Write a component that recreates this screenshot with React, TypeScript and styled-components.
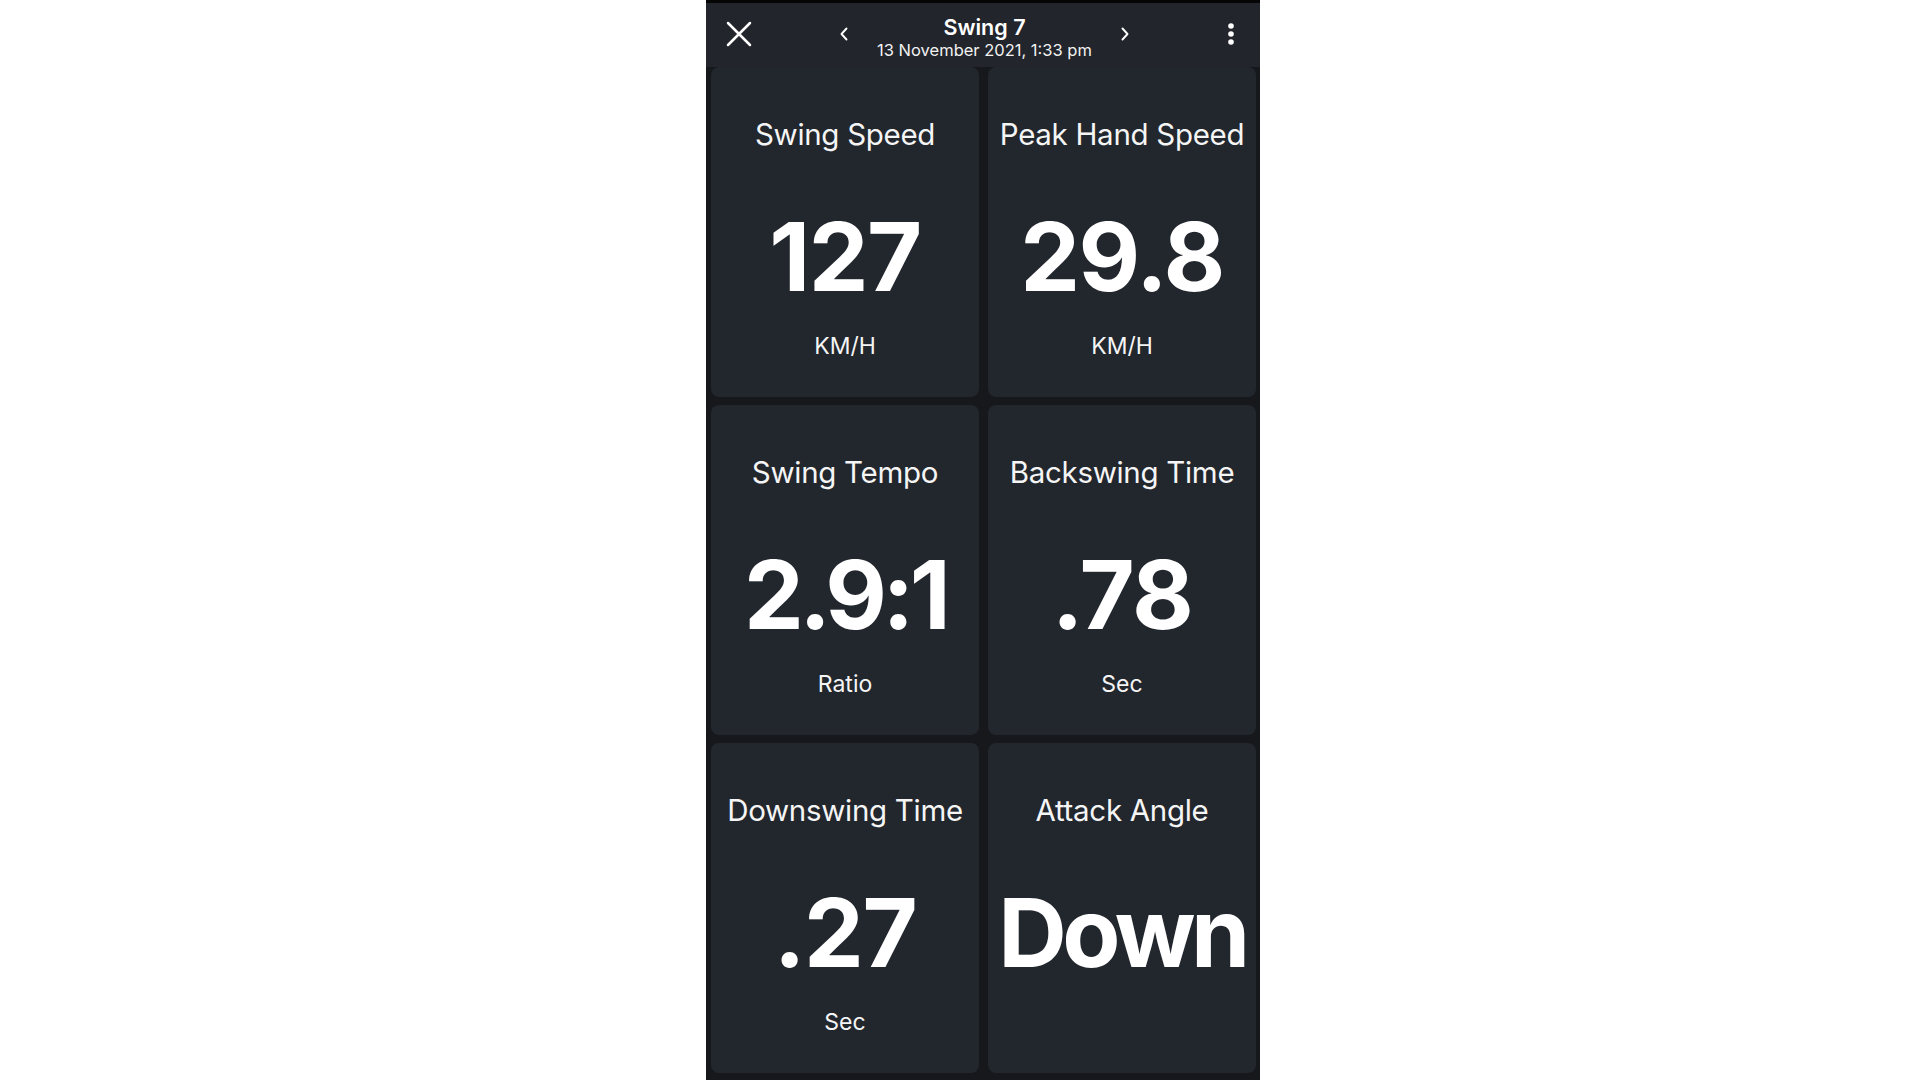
import styled, { createGlobalStyle } from 'styled-components';

const GlobalStyle = createGlobalStyle`
  html, body {
    margin: 0;
    padding: 0;
    background: #ffffff;
  }
  body {
    font-family: Inter, "Noto Sans", "Liberation Sans", sans-serif;
  }
`;

type Metric = {
  title: string;
  value: string;
  unit?: string;
  tight?: boolean;
};

const metrics: Metric[] = [
  { title: 'Swing Speed', value: '127', unit: 'KM/H' },
  { title: 'Peak Hand Speed', value: '29.8', unit: 'KM/H' },
  { title: 'Swing Tempo', value: '2.9:1', unit: 'Ratio', tight: true },
  { title: 'Backswing Time', value: '.78', unit: 'Sec' },
  { title: 'Downswing Time', value: '.27', unit: 'Sec' },
  { title: 'Attack Angle', value: 'Down', tight: true },
];

const App = () => {
  return (
    <>
      <GlobalStyle />
      <Page>
        <Phone>
          <StatusStrip />
          <Header>
            <CloseButton aria-label="close">
              <svg width="26" height="26" viewBox="0 0 26 26" fill="none" stroke="#fff" strokeWidth="2.5" strokeLinecap="round">
                <path d="M2 2 L24 24 M24 2 L2 24" />
              </svg>
            </CloseButton>
            <Nav>
              <Chevron aria-label="previous">
                <svg width="10" height="16" viewBox="0 0 10 16" fill="none" stroke="#fff" strokeWidth="1.9" strokeLinecap="round" strokeLinejoin="round">
                  <path d="M7.5 2.5 L2.5 8 L7.5 13.5" />
                </svg>
              </Chevron>
              <TitleBlock>
                <Title>Swing 7</Title>
                <Subtitle>13 November 2021, 1:33 pm</Subtitle>
              </TitleBlock>
              <Chevron aria-label="next">
                <svg width="10" height="16" viewBox="0 0 10 16" fill="none" stroke="#fff" strokeWidth="1.9" strokeLinecap="round" strokeLinejoin="round">
                  <path d="M2.5 2.5 L7.5 8 L2.5 13.5" />
                </svg>
              </Chevron>
            </Nav>
            <MoreButton aria-label="more">
              <svg width="8" height="24" viewBox="0 0 8 24" fill="#fff">
                <circle cx="4" cy="4" r="2.8" />
                <circle cx="4" cy="12" r="2.8" />
                <circle cx="4" cy="20" r="2.8" />
              </svg>
            </MoreButton>
          </Header>
          <Grid>
            {metrics.map((m) => (
              <Card key={m.title}>
                <CardTitle>{m.title}</CardTitle>
                <Value $tight={!!m.tight}>{m.value}</Value>
                <Unit>{m.unit ?? ''}</Unit>
              </Card>
            ))}
          </Grid>
        </Phone>
      </Page>
    </>
  );
};

const Page = styled.div`
  display: flex;
  justify-content: center;
  width: 100%;
  height: 1080px;
  overflow: hidden;
`;

const Phone = styled.div`
  width: 554px;
  height: 1080px;
  margin-left: 46px;
  background: #16181b;
  display: flex;
  flex-direction: column;
`;

const StatusStrip = styled.div`
  height: 3px;
  background: #050505;
`;

const Header = styled.div`
  height: 64px;
  background: #22252b;
  display: grid;
  grid-template-columns: 1fr auto 1fr;
  align-items: center;
  padding: 0 17px 0 20px;
  color: #fff;
`;

const CloseButton = styled.div`
  display: flex;
  align-items: center;
  justify-self: start;
  margin-top: -2px;
`;

const MoreButton = styled.div`
  display: flex;
  align-items: center;
  justify-content: center;
  justify-self: end;
  width: 24px;
  height: 24px;
  margin-top: -2px;
`;

const Nav = styled.div`
  display: flex;
  align-items: center;
  gap: 28px;
`;

const Chevron = styled.div`
  display: flex;
  align-items: center;
  margin-top: -2px;
`;

const TitleBlock = styled.div`
  display: flex;
  flex-direction: column;
  align-items: center;
  margin-top: 6px;
`;

const Title = styled.div`
  font-size: 21.5px;
  font-weight: 600;
  line-height: 24px;
`;

const Subtitle = styled.div`
  font-size: 16.5px;
  font-weight: 400;
  line-height: 22px;
  color: #f2f2f2;
`;

const Grid = styled.div`
  display: grid;
  grid-template-columns: 1fr 1fr;
  grid-template-rows: repeat(3, 330px);
  column-gap: 9px;
  row-gap: 8px;
  padding: 0 4px 0 5px;
`;

const Card = styled.div`
  background: #22262d;
  border-radius: 8px;
  display: flex;
  flex-direction: column;
  align-items: center;
  color: #fff;
  padding-top: 51px;
`;

const CardTitle = styled.div`
  font-size: 29.5px;
  font-weight: 400;
  line-height: 32px;
  letter-spacing: -0.3px;
  color: #f5f5f5;
  white-space: nowrap;
`;

const Value = styled.div<{ $tight: boolean }>`
  margin-top: 55px;
  font-size: 95px;
  font-weight: 700;
  line-height: 104px;
  letter-spacing: ${(p) => (p.$tight ? '-4.5px' : '-1.5px')};
  white-space: nowrap;
`;

const Unit = styled.div`
  margin-top: 23px;
  font-size: 23px;
  line-height: 28px;
  color: #f5f5f5;
`;

export default App;
